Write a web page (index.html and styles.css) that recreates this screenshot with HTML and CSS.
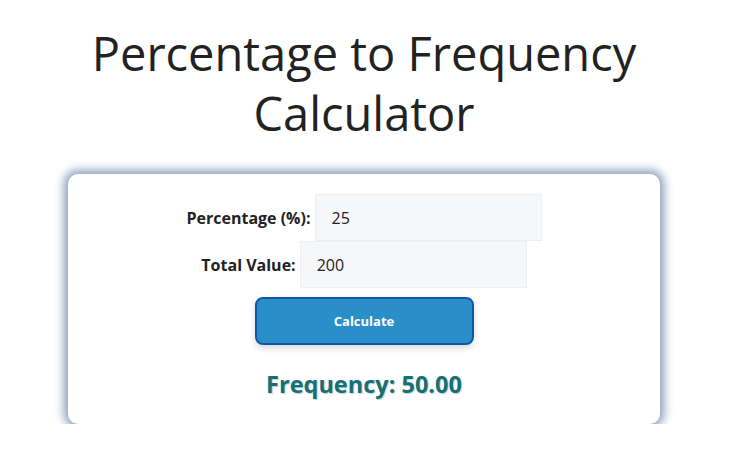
FILE: index.html
```html
<!DOCTYPE html>
<html lang="en">
<head>
    <meta charset="UTF-8">
    <meta name="viewport" content="width=device-width, initial-scale=1.0">
    <title>Percentage to Frequency Calculator</title>
    <link rel="stylesheet" href="styles.css">
</head>
<body>
    <div class="page">
        <h1>Percentage to Frequency Calculator</h1>
        <div class="calculator">
            <form id="calcForm">
                <div class="row">
                    <label for="percentage">Percentage (%):</label>
                    <input type="number" id="percentage" value="25">
                </div>
                <div class="row">
                    <label for="totalValue">Total Value:</label>
                    <input type="number" id="totalValue" value="200">
                </div>
                <button type="submit">Calculate</button>
            </form>
            <div id="result" class="result">Frequency: 50.00</div>
        </div>
    </div>
</body>
</html>
```

FILE: styles.css
```css
body {
    margin: 0;
    font-family: "Open Sans", "Noto Sans", Arial, sans-serif;
    background-color: #fff;
    color: #222;
}
.page {
    width: 592px;
    margin: 0 0 0 68px;
    display: flex;
    flex-direction: column;
    align-items: center;
}
h1 {
    margin: 23px 0 31px;
    font-size: 47px;
    font-weight: 400;
    line-height: 60px;
    text-align: center;
    color: #222;
}
.calculator {
    width: 100%;
    box-sizing: border-box;
    height: 250px;
    padding: 20px 0 0;
    background: #fff;
    border-radius: 10px;
    box-shadow: 0 0 10px 4px rgba(75, 110, 150, 0.65);
}
form {
    display: flex;
    flex-direction: column;
    align-items: center;
}
.row {
    display: flex;
    align-items: center;
    gap: 4px;
}
label {
    font-weight: 700;
    font-size: 16px;
}
input {
    width: 227px;
    height: 47px;
    box-sizing: border-box;
    padding: 0 16px;
    border: 1px solid #eceef0;
    background: #f6f7f9;
    font-family: inherit;
    font-size: 16px;
    color: #222;
    -moz-appearance: textfield;
}
input::-webkit-outer-spin-button,
input::-webkit-inner-spin-button {
    -webkit-appearance: none;
    margin: 0;
}
button {
    margin-top: 9px;
    width: 219px;
    height: 48px;
    background-color: #2a8ec9;
    border: 2px solid #0b5aa8;
    border-radius: 8px;
    color: #fff;
    font-family: inherit;
    font-weight: 700;
    font-size: 13px;
    cursor: pointer;
    box-shadow: 0 3px 6px rgba(0, 0, 0, 0.15);
}
button:hover {
    background-color: #1f7bb3;
}
.result {
    margin-top: 23px;
    text-align: center;
    font-size: 23.5px;
    font-weight: 700;
    color: #16706f;
    text-shadow: 1px 1px 1px rgba(120, 160, 200, 0.5);
}
```
